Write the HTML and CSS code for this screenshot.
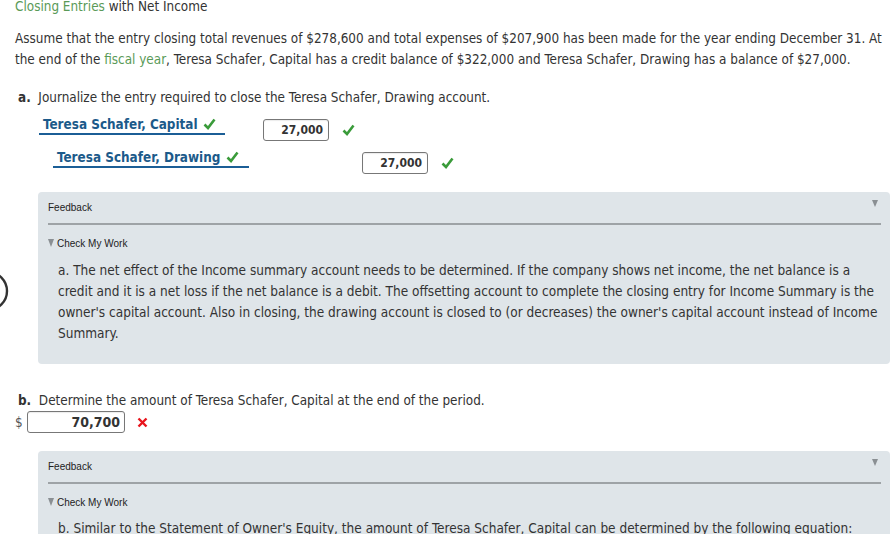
FILE: index.html
```html
<!DOCTYPE html>
<html>
<head>
<meta charset="utf-8">
<link rel="stylesheet" href="styles.css">
</head>
<body>
<svg class="side-circle" width="12" height="60" viewBox="0 0 12 60"><circle cx="-12" cy="30" r="19" fill="none" stroke="#333" stroke-width="2.4"/></svg>
<div class="page">
  <div class="title"><span class="green">Closing Entries</span> with Net Income</div>
  <p class="intro">Assume that the entry closing total revenues of $278,600 and total expenses of $207,900 has been made for the year ending December 31. At the end of the <span class="green">fiscal year</span>, Teresa Schafer, Capital has a credit balance of $322,000 and Teresa Schafer, Drawing has a balance of $27,000.</p>

  <div class="question"><b>a.</b>&nbsp; Journalize the entry required to close the Teresa Schafer, Drawing account.</div>

  <div class="journal">
    <div class="jrow debit">
      <div class="acct">Teresa Schafer, Capital <svg class="check" width="13" height="12" viewBox="0 0 13 12"><path d="M1.5 6.5 L5 10 L11.5 1.5" fill="none" stroke="#3a9b3a" stroke-width="2.6"/></svg></div>
      <div class="amt">27,000</div>
      <svg class="check" width="13" height="12" viewBox="0 0 13 12"><path d="M1.5 6.5 L5 10 L11.5 1.5" fill="none" stroke="#3a9b3a" stroke-width="2.6"/></svg>
    </div>
    <div class="jrow credit">
      <div class="acct">Teresa Schafer, Drawing <svg class="check" width="13" height="12" viewBox="0 0 13 12"><path d="M1.5 6.5 L5 10 L11.5 1.5" fill="none" stroke="#3a9b3a" stroke-width="2.6"/></svg></div>
      <div class="amt">27,000</div>
      <svg class="check" width="13" height="12" viewBox="0 0 13 12"><path d="M1.5 6.5 L5 10 L11.5 1.5" fill="none" stroke="#3a9b3a" stroke-width="2.6"/></svg>
    </div>
  </div>

  <div class="feedback first">
    <div class="fb-head"><span>Feedback</span><span class="tri"></span></div>
    <div class="fb-sub"><span class="tri-s"></span>Check My Work</div>
    <p class="fb-text">a. The net effect of the Income summary account needs to be determined. If the company shows net income, the net balance is a credit and it is a net loss if the net balance is a debit. The offsetting account to complete the closing entry for Income Summary is the owner's capital account. Also in closing, the drawing account is closed to (or decreases) the owner's capital account instead of Income Summary.</p>
  </div>

  <div class="question b"><b>b.</b>&nbsp; Determine the amount of Teresa Schafer, Capital at the end of the period.</div>
  <div class="answer-row">
    <span class="dollar">$</span>
    <div class="amt wide">70,700</div>
    <svg class="cross" width="11" height="11" viewBox="0 0 11 11"><path d="M1.5 1.5 L9.5 9.5 M9.5 1.5 L1.5 9.5" fill="none" stroke="#e8141c" stroke-width="2.4"/></svg>
  </div>

  <div class="feedback second">
    <div class="fb-head"><span>Feedback</span><span class="tri"></span></div>
    <div class="fb-sub"><span class="tri-s"></span>Check My Work</div>
    <p class="fb-text">b. Similar to the Statement of Owner's Equity, the amount of Teresa Schafer, Capital can be determined by the following equation:</p>
  </div>
</div>
</body>
</html>
```
FILE: styles.css
```css
html, body {
  margin: 0;
  padding: 0;
  background: #fff;
  overflow: hidden;
}
body {
  font-family: "DejaVu Sans Condensed", "DejaVu Sans", Verdana, sans-serif;
  font-stretch: condensed;
  font-size: 13.4px;
  color: #333;
  position: relative;
  height: 534px;
}
.side-circle {
  position: absolute;
  left: 0;
  top: 261px;
}
.page {
  padding: 0 2px 0 15px;
}
.green {
  color: #5a9a58;
}
.title {
  line-height: 14px;
}
.intro {
  margin: 14px 0 0 0;
  line-height: 21px;
  width: 872px;
}
.question {
  margin-top: 20px;
  margin-left: 3px;
  line-height: 16px;
}
.journal {
  margin-top: 13px;
}
.jrow {
  display: flex;
  align-items: flex-start;
  height: 22px;
}
.jrow.debit {
  padding-left: 24px;
}
.jrow.credit {
  margin-top: 11px;
  padding-left: 38px;
}
.acct {
  font-weight: bold;
  color: #1c5a8a;
  border-bottom: 2px solid #1b5e96;
  padding: 0 0 1px 4px;
  box-sizing: border-box;
  line-height: 14px;
  margin-top: -1px;
  white-space: nowrap;
}
.debit .acct {
  width: 186px;
  margin-right: 38px;
}
.credit .acct {
  width: 196px;
  margin-right: 113px;
}
.acct .check {
  margin-left: 1px;
  vertical-align: -1px;
}
.jrow > .check {
  margin-top: 5px;
}
.amt {
  box-sizing: border-box;
  width: 66px;
  height: 22px;
  border: 1px solid #777;
  border-radius: 3px;
  text-align: right;
  padding-right: 5px;
  font-size: 12px;
  font-weight: bold;
  line-height: 20px;
  color: #333;
  margin-right: 13px;
  box-shadow: inset 0 1px 1px rgba(0,0,0,0.08);
}
.feedback {
  margin-left: 23px;
  background: #dfe5e9;
  border-radius: 4px;
  padding: 0 0 0 10px;
  box-sizing: border-box;
}
.feedback.first {
  margin-top: 18px;
  height: 172px;
}
.fb-head {
  display: flex;
  justify-content: space-between;
  align-items: center;
  font-family: "Liberation Sans", Arial, sans-serif;
  font-stretch: normal;
  font-size: 10px;
  color: #222;
  height: 33px;
  margin-right: 9px;
  border-bottom: 2px solid #9ea3a6;
  box-sizing: border-box;
}
.tri {
  width: 0;
  height: 0;
  border-left: 3px solid transparent;
  border-right: 3px solid transparent;
  border-top: 7px solid #8a8f93;
  margin-top: -9px;
  margin-right: 3px;
}
.fb-sub {
  font-family: "Liberation Sans", Arial, sans-serif;
  font-stretch: normal;
  font-size: 10px;
  color: #222;
  margin-top: 12px;
  line-height: 14px;
  display: flex;
  align-items: center;
}
.tri-s {
  width: 0;
  height: 0;
  border-left: 3.5px solid transparent;
  border-right: 3.5px solid transparent;
  border-top: 8px solid #8a8f93;
  margin: -3px 3px 0 0;
}
.fb-text {
  font-size: 13.5px;
  line-height: 21px;
  color: #333;
  margin: 9px 0 0 10px;
  padding-right: 12px;
}
.question.b {
  margin-top: 29px;
}
.answer-row {
  display: flex;
  align-items: center;
  margin-top: 2px;
  height: 22px;
}
.dollar {
  color: #555;
  width: 12px;
}
.amt.wide {
  width: 98px;
  font-size: 14px;
  padding-right: 4px;
  margin-right: 12px;
}
.feedback.second {
  margin-top: 18px;
  height: 120px;
}
.second .fb-text {
  margin-top: 8px;
}
```
